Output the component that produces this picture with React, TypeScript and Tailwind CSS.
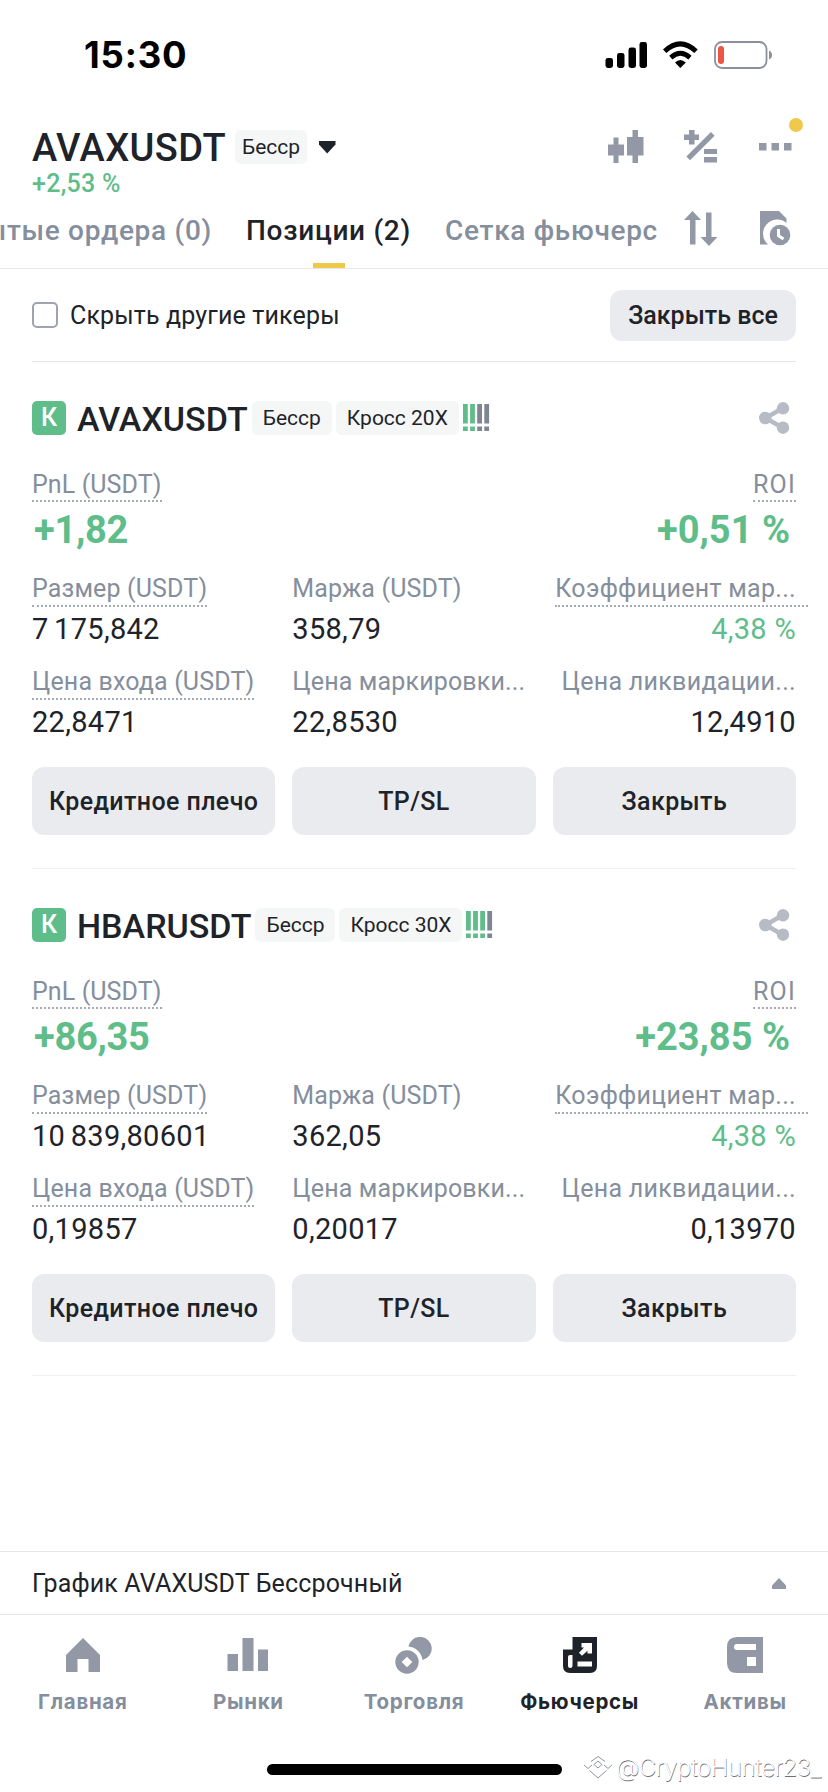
import React from 'react';

interface Position {
  symbol: string;
  leverage: string;
  risk: number;
  pnl: string;
  roi: string;
  size: string;
  margin: string;
  ratio: string;
  entry: string;
  mark: string;
  liquidation: string;
}

const positions: Position[] = [
  {
    symbol: 'AVAXUSDT',
    leverage: 'Кросс 20X',
    risk: 2,
    pnl: '+1,82',
    roi: '+0,51 %',
    size: '7 175,842',
    margin: '358,79',
    ratio: '4,38 %',
    entry: '22,8471',
    mark: '22,8530',
    liquidation: '12,4910',
  },
  {
    symbol: 'HBARUSDT',
    leverage: 'Кросс 30X',
    risk: 3,
    pnl: '+86,35',
    roi: '+23,85 %',
    size: '10 839,80601',
    margin: '362,05',
    ratio: '4,38 %',
    entry: '0,19857',
    mark: '0,20017',
    liquidation: '0,13970',
  },
];

const StatusBar = () => (
  <div className="flex h-[110px] justify-between pt-[34px] pl-[84px] pr-[56px]">
    <span className="font-['Inter'] text-[36.5px] leading-[42px] font-bold tracking-[0.8px] text-black">15:30</span>
    <svg width="168" height="42" viewBox="604 34 168 42">
      <rect x="605.5" y="58" width="7.5" height="10" rx="2.4" />
      <rect x="617" y="53" width="7.5" height="15" rx="2.4" />
      <rect x="628.5" y="47.5" width="7.5" height="20.5" rx="2.4" />
      <rect x="639.5" y="42" width="7.5" height="26" rx="2.4" />
      <path d="M664.7 51.2Q680.3 36.5 696 51.2" fill="none" stroke="#000" strokeWidth="5" />
      <path d="M670.8 57.6Q680.3 49 690 57.6" fill="none" stroke="#000" strokeWidth="4.8" />
      <path d="M675 62.5Q680.3 57.5 685.8 62.5L680.3 68Z" />
      <rect x="715" y="42" width="51.5" height="26" rx="7" fill="none" stroke="#8b909c" strokeWidth="1.8" />
      <path d="M769 50.5Q772 52 772 55T769 59.5Z" fill="#8b909c" />
      <rect x="718" y="46" width="6" height="18" rx="3" fill="#ee5542" />
    </svg>
  </div>
);

const CandlesIcon = () => (
  <svg width="36" height="33" viewBox="0 0 36 33" fill="#9298a5">
    <path d="M5.5 7.5h5v7H16v11h-5.5V33h-5v-7.5H0v-11h5.500zM24.500 0h5.500v7h5.500v18.500H30V33h-5.500v-7.500H19V7h5.500z" />
  </svg>
);

const CalcIcon = () => (
  <svg width="34" height="33" viewBox="0 0 34 33" fill="#9298a5">
    <path d="M5 0h5.500v4.500H15v5.500h-4.500v4.500H5V10H0V4.500h5zM27 2l3.600 3.800L6 30.300 2.400 26.500zM20 19h13v5H20zM20 27h13v5.500H20z" />
  </svg>
);

const MoreIcon = () => (
  <svg width="33" height="8" viewBox="0 0 33 8" fill="#9298a5">
    <path d="M0 0h7.500v7.500H0zM12.500 0H20v7.500h-7.500zM25 0h7.500v7.500H25z" />
  </svg>
);

const SortIcon = () => (
  <svg width="34" height="35" viewBox="0 0 34 35" fill="#9298a5">
    <path d="M8.500 0L17 9h-5.500v24.500H6V9H0zM22 1.500h5.500V26H33.500L25 35l-8.500-9H22z" />
  </svg>
);

const HistoryIcon = () => (
  <svg width="31" height="35" viewBox="0 0 31 35">
    <path d="M0 0h19l7.500 7.500v4.500A12.800 12.800 0 0 0 8 33.500H0z" fill="#9298a5" />
    <circle cx="20" cy="24" r="10.300" fill="#9298a5" />
    <path d="M18.500 18v6.800l5 3.200" fill="none" stroke="#fff" strokeWidth="3" />
  </svg>
);

const ShareIcon = () => (
  <svg width="31" height="32" viewBox="0 0 31 32" fill="#b7bbc4">
    <path d="M24 6L6.500 16 24 26" fill="none" stroke="#b7bbc4" strokeWidth="4.500" />
    <circle cx="24" cy="6.300" r="6.200" />
    <circle cx="6.300" cy="16" r="6.300" />
    <circle cx="24" cy="25.700" r="6.200" />
  </svg>
);

const RiskBars = ({ level }: { level: number }) => (
  <svg width="27" height="28" viewBox="0 0 27 28">
    {[0, 1, 2, 3].map((i) => (
      <path
        key={i}
        d={`M${i * 7.1} 0h4.800v19.500h-4.800zM${i * 7.1} 22.500h4.800v4.500h-4.800z`}
        fill={i < level ? '#5fbd8a' : '#7f8592'}
      />
    ))}
  </svg>
);

const Header = () => (
  <header className="flex h-[94px] justify-between pr-[36px] pl-8">
    <div>
      <div className="flex h-[63px] items-center pt-[11px]">
        <h1 className="w-[203px] pt-0.5 text-[38px] leading-[44px] font-medium tracking-[0.4px]">AVAXUSDT</h1>
        <span className="flex h-[34px] w-[72px] items-center justify-center rounded-md bg-[#f5f6f6] text-[21px] leading-none">
          Бесср
        </span>
        <svg className="ml-3" width="17" height="13" viewBox="0 0 17 13" fill="#1e2329">
          <path d="M0 0h16.500v3.500L8.200 12.500 0 3.500z" />
        </svg>
      </div>
      <p className="-mt-[7px] text-[25px] leading-[36px] font-medium tracking-[0.3px] text-[#5fbd8a]">+2,53 %</p>
    </div>
    <div className="relative flex items-start pt-5">
      <CandlesIcon />
      <div className="ml-10">
        <CalcIcon />
      </div>
      <div className="ml-[41px] pt-[13px]">
        <MoreIcon />
      </div>
      <span className="absolute top-2 -right-[11px] size-[14px] rounded-full bg-[#efc94c]" />
    </div>
  </header>
);

const Tabs = () => (
  <nav className="flex h-[65px] justify-between border-b border-[#e6e7e9] pr-[37px] text-[28px] font-medium tracking-[0.7px] text-[#848e9c]">
    <div className="flex w-[658px] overflow-hidden whitespace-nowrap">
      <div className="flex w-[212px] shrink-0 justify-end pt-[10px] leading-[34px]">Открытые ордера (0)</div>
      <div className="ml-[33px] flex w-[167px] shrink-0 flex-col items-center justify-between pt-[10px] leading-[34px] text-[#1e2329]">
        <span>Позиции (2)</span>
        <span className="h-[5px] w-8 bg-[#efc94c]" />
      </div>
      <div className="ml-[33px] shrink-0 pt-[10px] leading-[34px]">Сетка фьючерсов</div>
    </div>
    <div className="flex items-start gap-[42px] pt-[7px]">
      <SortIcon />
      <HistoryIcon />
    </div>
  </nav>
);

const FilterRow = () => (
  <div className="mx-8 flex h-[93px] items-center justify-between border-b border-[#e6e7e9]">
    <label className="flex items-center">
      <span className="size-[26px] rounded-[5px] border-2 border-[#9ea3ae]" />
      <span className="ml-3 pt-0.5 text-[25px] leading-[34px] tracking-[0.15px]">Скрыть другие тикеры</span>
    </label>
    <button className="h-[51px] w-[186px] rounded-xl bg-[#eaebef] pt-px text-[25px] font-medium">Закрыть все</button>
  </div>
);

interface FieldProps {
  label: string;
  value: string;
  dotted?: boolean;
  right?: boolean;
  green?: boolean;
  overhang?: boolean;
}

const Field = ({ label, value, dotted, right, green, overhang }: FieldProps) => (
  <div className={`flex h-[93px] flex-col whitespace-nowrap ${right ? 'items-end' : 'items-start'}`}>
    <span
      className={`h-[36px] border-b-2 text-[25px] leading-[36px] ${right ? 'tracking-[0.3px]' : 'tracking-[0.15px]'} text-[#848e9c] ${
        dotted ? 'border-dotted border-[#a5abb5]' : 'border-transparent'
      } ${overhang ? '-mr-3 pr-3' : ''}`}
    >
      {label}
    </span>
    <span
      className={`mt-[5px] text-[29px] leading-[34px] tracking-[0.3px] ${
        green ? 'text-[#5fbd8a]' : '[word-spacing:-2px]'
      }`}
    >
      {value}
    </span>
  </div>
);

const actions = ['Кредитное плечо', 'TP/SL', 'Закрыть'];

const PositionCard = ({ position }: { position: Position }) => (
  <section className="mx-8 h-[507px] border-b border-[#eeeff1] pt-[39px]">
    <div className="flex h-[34px] items-center">
      <span className="flex size-[34px] items-center justify-center rounded-[5px] bg-[#5fbd8a] text-[25px] font-medium text-white">
        К
      </span>
      <h2 className="ml-[11px] pt-0.5 text-[34px] leading-[34px] font-medium">{position.symbol}</h2>
      <span className="ml-1 flex h-[34px] w-20 items-center justify-center rounded-md bg-[#f5f6f6] pt-0.5 text-[21px]">
        Бесср
      </span>
      <span className="ml-1 flex h-[34px] w-[123px] items-center justify-center rounded-md bg-[#f5f6f6] pt-0.5 text-[21px]">
        {position.leverage}
      </span>
      <span className="ml-1">
        <RiskBars level={position.risk} />
      </span>
      <span className="mr-[6px] ml-auto">
        <ShareIcon />
      </span>
    </div>

    <div className="mt-[31px] flex h-[105px] justify-between">
      <div className="flex flex-col items-start">
        <span className="h-[36px] border-b-2 border-dotted border-[#a5abb5] text-[25px] leading-[38px] tracking-[0.1px] text-[#848e9c]">
          PnL (USDT)
        </span>
        <span className="mt-2 ml-0.5 text-[38px] leading-[40px] font-bold tracking-[-0.3px] text-[#5fbd8a]">
          {position.pnl}
        </span>
      </div>
      <div className="flex flex-col items-end">
        <span className="h-[36px] border-b-2 border-dotted border-[#a5abb5] text-[25px] leading-[38px] tracking-[1.2px] text-[#848e9c]">
          ROI
        </span>
        <span className="mt-2 mr-[6px] text-[38px] leading-[40px] font-bold text-[#5fbd8a]">{position.roi}</span>
      </div>
    </div>

    <div className="grid grid-cols-3 gap-x-[17px]">
      <Field label="Размер (USDT)" value={position.size} dotted />
      <Field label="Маржа (USDT)" value={position.margin} />
      <Field label="Коэффициент мар..." value={position.ratio} dotted right green overhang />
      <Field label="Цена входа (USDT)" value={position.entry} dotted />
      <Field label="Цена маркировки..." value={position.mark} />
      <Field label="Цена ликвидации..." value={position.liquidation} right />
    </div>

    <div className="mt-[10px] grid grid-cols-3 gap-x-[17px]">
      {actions.map((action) => (
        <button
          key={action}
          className="h-[68px] rounded-xl bg-[#eaebef] pt-0.5 text-[25px] font-medium tracking-[0.4px] whitespace-nowrap"
        >
          {action}
        </button>
      ))}
    </div>
  </section>
);

const ChartBar = () => (
  <div className="flex h-[64px] items-center justify-between border-y border-[#e6e7e9] pr-[42px] pl-8">
    <span className="pt-0.5 text-[25px] tracking-[0.15px]">График AVAXUSDT Бессрочный</span>
    <svg width="14" height="11" viewBox="0 0 14 11" fill="#9298a5">
      <path d="M7 0l7 7.500V11H0V7.500z" />
    </svg>
  </div>
);

const HomeIcon = () => (
  <svg width="34" height="34" viewBox="0 0 34 34" fill="#9298a5">
    <path d="M17 0l17 17v17H22.500V21h-11v13H0V17z" />
  </svg>
);

const MarketsIcon = () => (
  <svg width="42" height="36" viewBox="0 0 42 36" fill="#9298a5">
    <path d="M.5 17H11v17H.5zM15.500 1h11v33h-11zM31 12.500h10V34H31z" />
  </svg>
);

const TradeIcon = () => (
  <svg width="37" height="37" viewBox="0 0 37 37" fill="#9298a5">
    <path d="M13.500 9.500A11.700 11.700 0 1 1 27.500 23A15.500 15.500 0 0 0 13.500 9.500z" />
    <path
      fillRule="evenodd"
      d="M12 13.300a11.700 11.700 0 1 1 0 23.400a11.700 11.700 0 0 1 0-23.400zM12 19.700l-5.300 5.300 5.300 5.300 5.300-5.300z"
    />
  </svg>
);

const FuturesIcon = () => (
  <svg width="34" height="36" viewBox="0 0 34 36" fill="#1e2329">
    <path
      fillRule="evenodd"
      d="M9.500 0H34v29q0 7-7 7H7q-7 0-7-7V12.500h9.500zM5 20v9q0 2 2.200 2T9.500 29V18H7Q5 18 5 20zM14.500 24.500v5H29v-5zM18.500 6v4.500h2.500L16 15.800l3 3 5.500-5v2.700H29V6z"
    />
  </svg>
);

const AssetsIcon = () => (
  <svg width="36" height="36" viewBox="0 0 36 36" fill="#9298a5">
    <path
      fillRule="evenodd"
      d="M10 0h26v36H10Q0 36 0 26V10Q0 0 10 0zM10 7q-3 0-3 3t3 3h19V7zM20 20v9h9v-9z"
    />
  </svg>
);

const navItems = [
  { label: 'Главная', icon: <HomeIcon /> },
  { label: 'Рынки', icon: <MarketsIcon /> },
  { label: 'Торговля', icon: <TradeIcon /> },
  { label: 'Фьючерсы', icon: <FuturesIcon />, active: true },
  { label: 'Активы', icon: <AssetsIcon /> },
];

const BottomNav = () => (
  <nav className="grid h-[147px] grid-cols-5 pt-[21px]">
    {navItems.map((item) => (
      <div key={item.label} className="flex flex-col items-center">
        <span className="flex h-[38px] items-center">{item.icon}</span>
        <span
          className={`mt-[12px] font-['Inter'] text-[20.5px] leading-[32px] font-bold tracking-[0.7px] ${
            item.active ? 'text-[#1e2329]' : 'text-[#848e9c]'
          }`}
        >
          {item.label}
        </span>
      </div>
    ))}
  </nav>
);

const Footer = () => (
  <footer className="flex h-[30px] items-start pt-[2px] pl-[267px]">
    <div className="h-[11px] w-[295px] shrink-0 rounded-full bg-black" />
    <div className="-mt-[10px] ml-[21px] flex items-center">
      <svg width="30" height="26" viewBox="0 0 30 26" fill="none" stroke="#8f949e" strokeWidth="1">
        <path d="M8 6.500l7-5 7 5M10.500 10L15 6l4.500 4M1 10l4 3.500L9 10M21 10l4 3.500 4-3.500M11.500 10l3.500 3 3.500-3M6.500 15.500L15 23l8.500-7.500" />
      </svg>
      <span className="ml-[3px] font-['Inter'] text-[24px] leading-[28px] font-light tracking-[-0.6px] text-white [text-shadow:0.5px_1px_0.5px_#6b707a]">
        @CryptoHunter23_
      </span>
    </div>
  </footer>
);

const App: React.FC = () => {
  return (
    <div className="flex h-[1792px] w-[828px] flex-col overflow-hidden bg-white font-['Roboto','Noto_Sans',sans-serif] text-[#1e2329]">
      <StatusBar />
      <Header />
      <Tabs />
      <FilterRow />
      {positions.map((position) => (
        <PositionCard key={position.symbol} position={position} />
      ))}
      <div className="mt-auto">
        <ChartBar />
        <BottomNav />
        <Footer />
      </div>
    </div>
  );
};

export default App;
